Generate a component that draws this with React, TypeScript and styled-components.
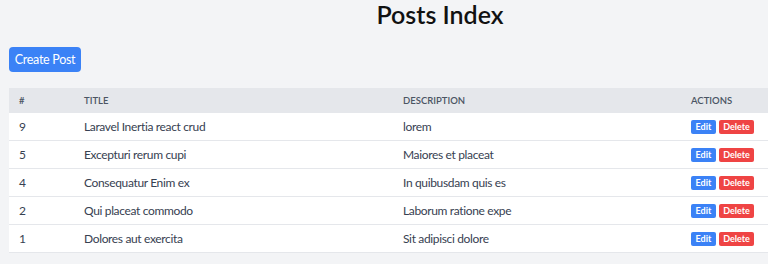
import React from "react";
import styled, { createGlobalStyle } from "styled-components";

const Global = createGlobalStyle`
  html, body { margin: 0; padding: 0; background: #f3f4f6; overflow: hidden; }
  body { font-family: Lato, "Open Sans", sans-serif; color: #1f2937; }
`;

const Viewport = styled.div`
  width: 100vw;
  overflow: hidden;
`;

const Page = styled.div`
  width: 880px;
  padding: 0 9px;
  box-sizing: border-box;
  display: flex;
  flex-direction: column;
`;

const Title = styled.h1`
  margin: 0;
  text-align: center;
  font-size: 25px;
  line-height: 28px;
  font-weight: 600;
  color: #111;
`;

const Toolbar = styled.div`
  display: flex;
  margin-top: 19px;
  margin-bottom: 16px;
`;

const PrimaryButton = styled.button`
  height: 25px;
  width: 72px;
  border: none;
  border-radius: 4px;
  background: #3b82f6;
  color: #fff;
  font-family: inherit;
  font-size: 12.5px;
  letter-spacing: -0.3px;
  padding: 0;
  cursor: pointer;
`;

const Table = styled.div`
  display: grid;
  grid-template-columns: 65px 319px 288px 1fr;
`;

const HeadCell = styled.div`
  background: #e5e7eb;
  height: 25px;
  display: flex;
  align-items: center;
  padding-left: 10px;
  font-size: 9.5px;
  font-weight: 600;
  text-transform: uppercase;
  color: #4b5563;
`;

const Cell = styled.div`
  background: #fff;
  height: 27px;
  border-bottom: 1px solid #e5e7eb;
  display: flex;
  align-items: center;
  gap: 3px;
  padding-left: 10px;
  font-size: 12px;
  letter-spacing: -0.35px;
  color: #374151;
`;

const SmallButton = styled.button<{ $variant: "blue" | "red" }>`
  height: 14px;
  width: ${(p) => (p.$variant === "blue" ? "25px" : "35px")};
  padding: 0;
  border: none;
  border-radius: 2px;
  background: ${(p) => (p.$variant === "blue" ? "#3b82f6" : "#ef4444")};
  color: #fff;
  font-family: inherit;
  font-size: 9px;
  font-weight: 700;
  letter-spacing: 0;
  line-height: 14px;
  cursor: pointer;
`;

const posts = [
  { id: 9, title: "Laravel Inertia react crud", description: "lorem" },
  { id: 5, title: "Excepturi rerum cupi", description: "Maiores et placeat" },
  { id: 4, title: "Consequatur Enim ex", description: "In quibusdam quis es" },
  { id: 2, title: "Qui placeat commodo", description: "Laborum ratione expe" },
  { id: 1, title: "Dolores aut exercita", description: "Sit adipisci dolore" },
];

export default function App() {
  return (
    <>
      <Global />
      <Viewport>
        <Page>
          <Title>Posts Index</Title>
          <Toolbar>
            <PrimaryButton>Create Post</PrimaryButton>
          </Toolbar>
          <Table>
            <HeadCell>#</HeadCell>
            <HeadCell>Title</HeadCell>
            <HeadCell>Description</HeadCell>
            <HeadCell>Actions</HeadCell>
            {posts.map((p) => (
              <React.Fragment key={p.id}>
                <Cell>{p.id}</Cell>
                <Cell>{p.title}</Cell>
                <Cell>{p.description}</Cell>
                <Cell>
                  <SmallButton $variant="blue">Edit</SmallButton>
                  <SmallButton $variant="red">Delete</SmallButton>
                </Cell>
              </React.Fragment>
            ))}
          </Table>
        </Page>
      </Viewport>
    </>
  );
}
